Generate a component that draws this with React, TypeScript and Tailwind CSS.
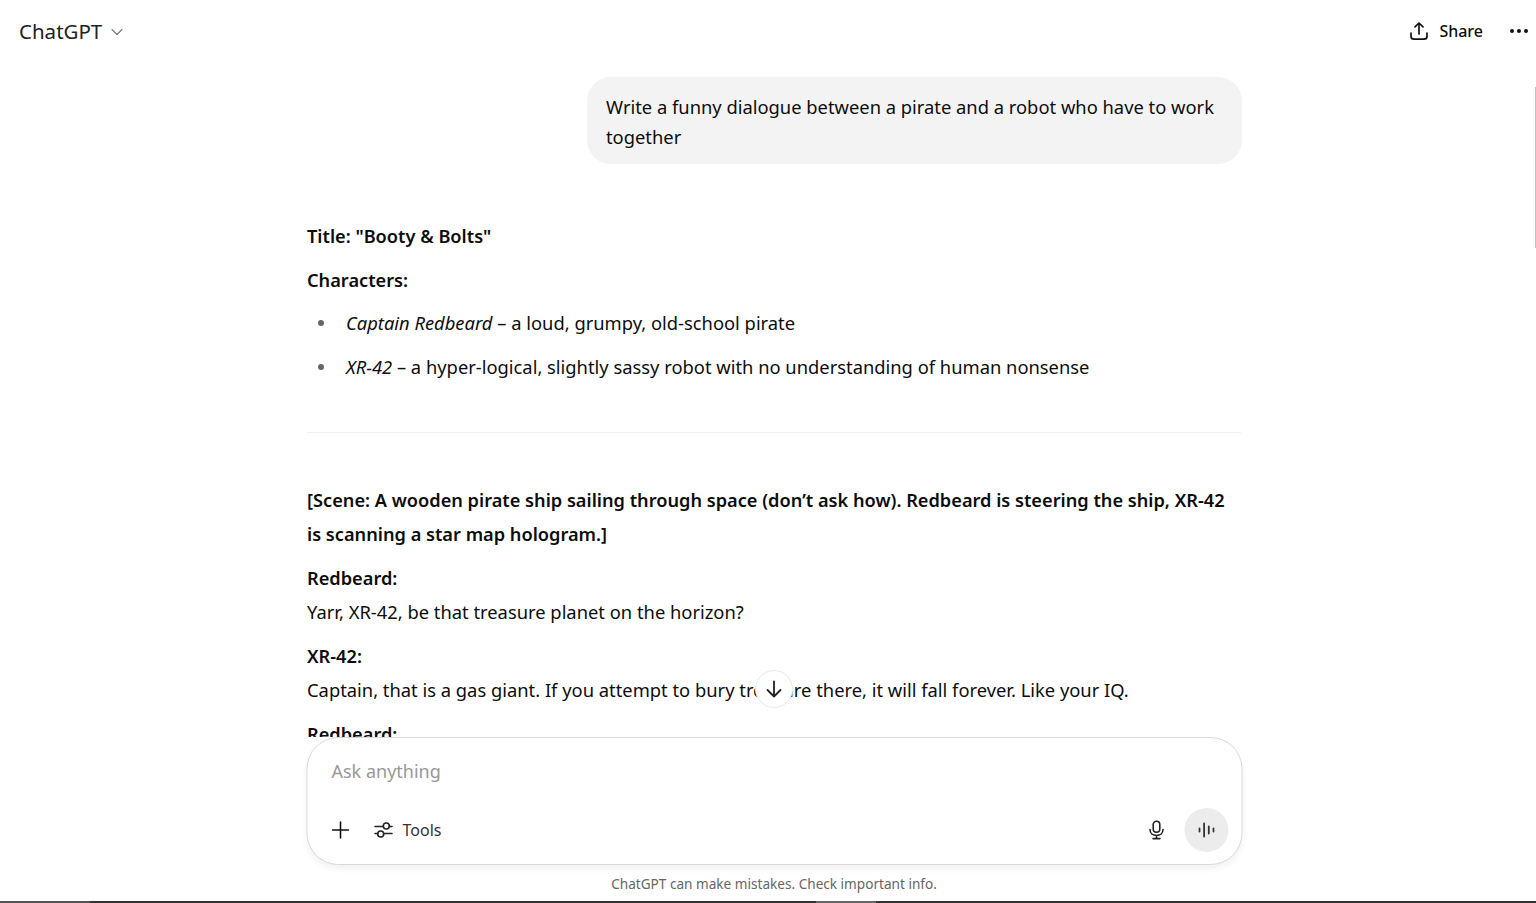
import React from "react";
import { ChevronDown } from "lucide-react";

const font = "font-['Noto_Sans','Open_Sans',sans-serif]";
const bold = "font-semibold text-[18.200px]";

function ShareIcon() {
  return (
    <svg width="20" height="20" viewBox="0 0 20 20" fill="none" stroke="currentColor" strokeWidth="1.7" strokeLinecap="round" strokeLinejoin="round">
      <path d="M10 13V2.200M6 5.800 10 2l4 3.800" />
      <path d="M2 12v3.200C2 17 3.300 18.200 5 18.200h10c1.700 0 3-1.200 3-3V12" />
    </svg>
  );
}
function ToolsIcon() {
  return (
    <svg width="20" height="20" viewBox="0 0 20 20" fill="none" stroke="currentColor" strokeWidth="1.6" strokeLinecap="round">
      <path d="M1.500 6.500h8.200M15.800 6.500h2.700M1.500 13.500h2.700M10.300 13.500h8.200" />
      <circle cx="12.800" cy="6" r="3" />
      <circle cx="7.200" cy="14" r="3" />
    </svg>
  );
}
function PlusIcon() {
  return (
    <svg width="20" height="20" viewBox="0 0 20 20" fill="none" stroke="currentColor" strokeWidth="1.6" strokeLinecap="round">
      <path d="M10 2v16M2 10h16" />
    </svg>
  );
}
function MicIcon() {
  return (
    <svg width="20" height="20" viewBox="0 0 20 20" fill="none" stroke="currentColor" strokeWidth="1.600" strokeLinecap="round">
      <rect x="6.700" y="1.300" width="6.600" height="11" rx="3.300" />
      <path d="M3.500 9.500c0 3.700 2.900 6 6.500 6s6.500-2.300 6.500-6M10 15.500v3M6.500 18.600h7" />
    </svg>
  );
}
function VoiceIcon() {
  return (
    <svg width="20" height="20" viewBox="0 0 20 20" fill="none" stroke="currentColor" strokeWidth="1.800" strokeLinecap="round">
      <path d="M3 8.500v3M7.600 3.500v13M12.300 6.500v7M17 8.500v3" />
    </svg>
  );
}
function ArrowDown() {
  return (
    <svg width="20" height="20" viewBox="0 0 20 20" fill="none" stroke="currentColor" strokeWidth="1.800" strokeLinecap="round" strokeLinejoin="round">
      <path d="M10 2.500v15M3.500 11l6.500 6.500 6.500-6.500" />
    </svg>
  );
}

export default function App() {
  return (
    <div className={`relative h-[903px] w-full flex flex-col overflow-hidden bg-white text-[#0d0d0d] ${font}`}>
      <header className="h-[62px] shrink-0 flex items-center justify-between pl-[19px] pr-[7px]">
        <div className="flex items-center gap-[5px]">
          <span className="text-[20.500px] text-[#222]">ChatGPT</span>
          <ChevronDown size={20} strokeWidth={1.3} className="text-[#777] mt-[1px]" />
        </div>
        <div className="flex items-center">
          <span className="text-[#111]"><ShareIcon /></span>
          <span className="ml-[10px] text-[16px] font-medium mr-[1px]">Share</span>
          <span className="ml-[26px] flex gap-[3.500px] w-[19px]">
            <i className="block size-[3.500px] rounded-full bg-[#111]" />
            <i className="block size-[3.500px] rounded-full bg-[#111]" />
            <i className="block size-[3.500px] rounded-full bg-[#111]" />
          </span>
        </div>
      </header>

      <main className="relative flex-1 min-h-0 overflow-hidden">
        <div className="w-[934px] mx-auto translate-x-[6px] text-[18.350px] leading-[34px]">
          <div className="flex justify-end mt-[15px]">
            <div className="w-[655px] bg-[#f3f3f3] rounded-[24px] pl-[19px] pr-[20px] pt-[15px] pb-[12px] leading-[30px] mr-[-1px]">
              Write a funny dialogue between a pirate and a robot who have to work together
            </div>
          </div>
          <p className={`mt-[55px] ${bold}`}>Title: "Booty &amp; Bolts"</p>
          <p className={`mt-[10px] ${bold}`}>Characters:</p>
          <ul className="mt-[9px]">
            <li className="flex items-center"><span className="size-[6px] rounded-full bg-[#666] ml-[11px] mr-[22px] shrink-0" /><span><em>Captain Redbeard</em> – a loud, grumpy, old-school pirate</span></li>
            <li className="mt-[10px] flex items-center"><span className="size-[6px] rounded-full bg-[#666] ml-[11px] mr-[22px] shrink-0" /><span><em>XR-42</em> – a hyper-logical, slightly sassy robot with no understanding of human nonsense</span></li>
          </ul>
          <hr className="mt-[48px] border-t border-[#f0f0f0]" />
          <p className={`mt-[50px] ${bold}`}>[Scene: A wooden pirate ship sailing through space (don’t ask how). Redbeard is steering the ship, XR-42 is scanning a star map hologram.]</p>
          <p className="mt-[10px]"><strong className={bold}>Redbeard:</strong><br />Yarr, XR-42, be that treasure planet on the horizon?</p>
          <p className="mt-[10px]"><strong className={bold}>XR-42:</strong><br />Captain, that is a gas giant. If you attempt to bury treasure there, it will fall forever. Like your IQ.</p>
          <p className="mt-[10px]"><strong className={bold}>Redbeard:</strong></p>
        </div>
        <button className="absolute left-[755px] top-[608px] size-[38px] rounded-full bg-white border border-[#e8e8e8] flex items-center justify-center text-[#222]">
          <ArrowDown />
        </button>
      </main>

      <div className="shrink-0 w-[936px] mx-auto translate-x-[6.500px] h-[128px] bg-white rounded-[32px] border border-[#d9d9d9] shadow-[0_4px_6px_rgba(0,0,0,0.05)] flex flex-col pl-[24px] pr-[13px]">
        <div className="pt-[19px] text-[18px] leading-[28px] text-[#999]">Ask anything</div>
        <div className="mt-auto mb-[12px] flex items-center">
          <span className="text-[#111] -ml-[1px]"><PlusIcon /></span>
          <span className="ml-[23px] text-[#222]"><ToolsIcon /></span>
          <span className="ml-[9px] text-[16px] text-[#333]">Tools</span>
          <span className="ml-auto text-[#222]"><MicIcon /></span>
          <span className="ml-[18px] size-[44px] rounded-full bg-[#ececec] flex items-center justify-center text-[#333]"><VoiceIcon /></span>
        </div>
      </div>

      <div className="shrink-0 h-[36px] pt-[10px] text-center text-[13.600px] leading-[18px] text-[#666] pl-[12px]">ChatGPT can make mistakes. Check important info.</div>
      <div className="shrink-0 h-[2px] bg-[#333] flex">
        <span className="w-[90px] bg-[#555]" />
        <span className="ml-[726px] w-[60px] bg-[#666]" />
      </div>

      <div className="absolute right-0 top-[87px] h-[161px] w-[1px] bg-[#c4c4c4]" />
    </div>
  );
}
